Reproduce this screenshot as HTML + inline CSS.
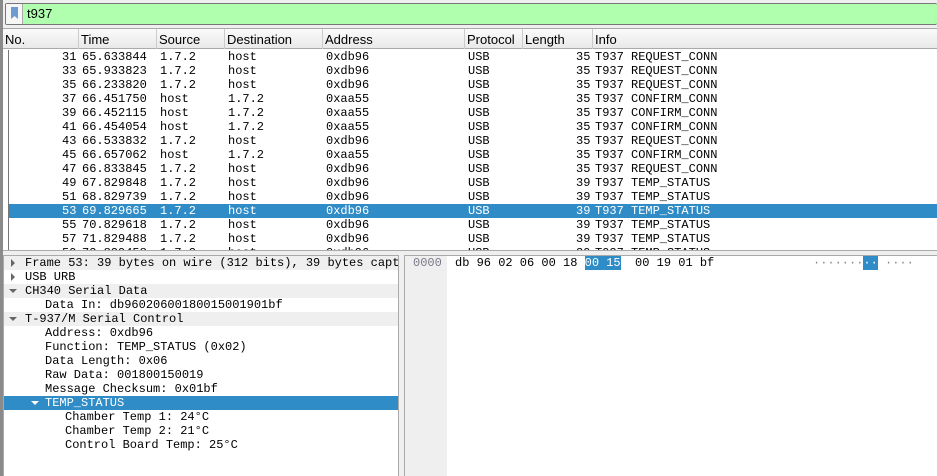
<!DOCTYPE html>
<html><head><meta charset="utf-8"><style>
*{margin:0;padding:0;box-sizing:border-box}
body{width:937px;height:476px;overflow:hidden;background:#efefef;position:relative;font-family:"Liberation Mono",monospace;font-size:12px;color:#000}
.a{position:absolute;white-space:pre}
.sans{font-family:"Liberation Sans",sans-serif;font-size:12px}
.row{position:absolute;left:0;width:937px;height:14px;line-height:14px}
.row span{position:absolute;top:0;white-space:pre}
.sel{background:#308cc6;color:#fff}
.d{position:absolute;left:0;width:398px;height:14px;line-height:14px;white-space:pre}
.g{background:#efefef}
.tri{position:absolute;left:7px;width:0;height:0}
.tr{border-top:4px solid transparent;border-bottom:4px solid transparent;border-left:4px solid #666;top:3px}
.td{border-left:4px solid transparent;border-right:4px solid transparent;border-top:4px solid #666;top:5px;left:5px}
</style></head><body>
<div class="a" style="left:0;top:0;width:3px;height:476px;background:#8a8a8a"></div>
<div class="a" style="left:5px;top:3px;width:932px;height:22px;border:1px solid #777;border-right:none;background:#afffaf;border-radius:2px"></div>
<div class="a" style="left:6px;top:4px;width:17px;height:20px;background:#f6f6f6;border-right:1px solid #aaa"></div>
<div class="a" style="left:11px;top:7px;width:7px;height:12px;background:#6b9bd1;clip-path:polygon(0 0,100% 0,100% 100%,50% 75%,0 100%)"></div>
<div class="a sans" style="left:27px;top:6px;font-size:13px">t937</div>
<div class="a" style="left:3px;top:28px;width:934px;height:223px;background:#fff;border-top:1px solid #aaa;border-bottom:1px solid #aaa"></div>
<div class="a" style="left:3px;top:29px;width:934px;height:20px;background:linear-gradient(#fafafa,#e9e9e9);border-bottom:1px solid #aaa"></div>
<div class="a sans" style="left:5px;top:32px;font-size:13px">No.</div>
<div class="a sans" style="left:81px;top:32px;font-size:13px">Time</div>
<div class="a sans" style="left:159px;top:32px;font-size:13px">Source</div>
<div class="a sans" style="left:227px;top:32px;font-size:13px">Destination</div>
<div class="a sans" style="left:325px;top:32px;font-size:13px">Address</div>
<div class="a sans" style="left:467px;top:32px;font-size:13px">Protocol</div>
<div class="a sans" style="left:525px;top:32px;font-size:13px">Length</div>
<div class="a sans" style="left:595px;top:32px;font-size:13px">Info</div>
<div class="a" style="left:78px;top:29px;width:1px;height:20px;background:#ccc"></div>
<div class="a" style="left:156px;top:29px;width:1px;height:20px;background:#ccc"></div>
<div class="a" style="left:224px;top:29px;width:1px;height:20px;background:#ccc"></div>
<div class="a" style="left:322px;top:29px;width:1px;height:20px;background:#ccc"></div>
<div class="a" style="left:464px;top:29px;width:1px;height:20px;background:#ccc"></div>
<div class="a" style="left:522px;top:29px;width:1px;height:20px;background:#ccc"></div>
<div class="a" style="left:592px;top:29px;width:1px;height:20px;background:#ccc"></div>
<div class="a" style="left:3px;top:50px;width:934px;height:200px;overflow:hidden">
<div class="a" style="left:5px;top:0;width:1px;height:200px;background:#777"></div>
<div class="row" style="top:0px"><span style="left:59px">31</span><span style="left:79px">65.633844</span><span style="left:157px">1.7.2</span><span style="left:225px">host</span><span style="left:323px">0xdb96</span><span style="left:465px">USB</span><span style="left:573px">35</span><span style="left:592px">T937 REQUEST_CONN</span></div>
<div class="row" style="top:14px"><span style="left:59px">33</span><span style="left:79px">65.933823</span><span style="left:157px">1.7.2</span><span style="left:225px">host</span><span style="left:323px">0xdb96</span><span style="left:465px">USB</span><span style="left:573px">35</span><span style="left:592px">T937 REQUEST_CONN</span></div>
<div class="row" style="top:28px"><span style="left:59px">35</span><span style="left:79px">66.233820</span><span style="left:157px">1.7.2</span><span style="left:225px">host</span><span style="left:323px">0xdb96</span><span style="left:465px">USB</span><span style="left:573px">35</span><span style="left:592px">T937 REQUEST_CONN</span></div>
<div class="row" style="top:42px"><span style="left:59px">37</span><span style="left:79px">66.451750</span><span style="left:157px">host</span><span style="left:225px">1.7.2</span><span style="left:323px">0xaa55</span><span style="left:465px">USB</span><span style="left:573px">35</span><span style="left:592px">T937 CONFIRM_CONN</span></div>
<div class="row" style="top:56px"><span style="left:59px">39</span><span style="left:79px">66.452115</span><span style="left:157px">host</span><span style="left:225px">1.7.2</span><span style="left:323px">0xaa55</span><span style="left:465px">USB</span><span style="left:573px">35</span><span style="left:592px">T937 CONFIRM_CONN</span></div>
<div class="row" style="top:70px"><span style="left:59px">41</span><span style="left:79px">66.454054</span><span style="left:157px">host</span><span style="left:225px">1.7.2</span><span style="left:323px">0xaa55</span><span style="left:465px">USB</span><span style="left:573px">35</span><span style="left:592px">T937 CONFIRM_CONN</span></div>
<div class="row" style="top:84px"><span style="left:59px">43</span><span style="left:79px">66.533832</span><span style="left:157px">1.7.2</span><span style="left:225px">host</span><span style="left:323px">0xdb96</span><span style="left:465px">USB</span><span style="left:573px">35</span><span style="left:592px">T937 REQUEST_CONN</span></div>
<div class="row" style="top:98px"><span style="left:59px">45</span><span style="left:79px">66.657062</span><span style="left:157px">host</span><span style="left:225px">1.7.2</span><span style="left:323px">0xaa55</span><span style="left:465px">USB</span><span style="left:573px">35</span><span style="left:592px">T937 CONFIRM_CONN</span></div>
<div class="row" style="top:112px"><span style="left:59px">47</span><span style="left:79px">66.833845</span><span style="left:157px">1.7.2</span><span style="left:225px">host</span><span style="left:323px">0xdb96</span><span style="left:465px">USB</span><span style="left:573px">35</span><span style="left:592px">T937 REQUEST_CONN</span></div>
<div class="row" style="top:126px"><span style="left:59px">49</span><span style="left:79px">67.829848</span><span style="left:157px">1.7.2</span><span style="left:225px">host</span><span style="left:323px">0xdb96</span><span style="left:465px">USB</span><span style="left:573px">39</span><span style="left:592px">T937 TEMP_STATUS</span></div>
<div class="row" style="top:140px"><span style="left:59px">51</span><span style="left:79px">68.829739</span><span style="left:157px">1.7.2</span><span style="left:225px">host</span><span style="left:323px">0xdb96</span><span style="left:465px">USB</span><span style="left:573px">39</span><span style="left:592px">T937 TEMP_STATUS</span></div>
<div class="row sel" style="top:154px;left:6px"><span style="left:53px">53</span><span style="left:73px">69.829665</span><span style="left:151px">1.7.2</span><span style="left:219px">host</span><span style="left:317px">0xdb96</span><span style="left:459px">USB</span><span style="left:567px">39</span><span style="left:586px">T937 TEMP_STATUS</span></div>
<div class="row" style="top:168px"><span style="left:59px">55</span><span style="left:79px">70.829618</span><span style="left:157px">1.7.2</span><span style="left:225px">host</span><span style="left:323px">0xdb96</span><span style="left:465px">USB</span><span style="left:573px">39</span><span style="left:592px">T937 TEMP_STATUS</span></div>
<div class="row" style="top:182px"><span style="left:59px">57</span><span style="left:79px">71.829488</span><span style="left:157px">1.7.2</span><span style="left:225px">host</span><span style="left:323px">0xdb96</span><span style="left:465px">USB</span><span style="left:573px">39</span><span style="left:592px">T937 TEMP_STATUS</span></div>
<div class="row" style="top:196px"><span style="left:59px">59</span><span style="left:79px">72.829458</span><span style="left:157px">1.7.2</span><span style="left:225px">host</span><span style="left:323px">0xdb96</span><span style="left:465px">USB</span><span style="left:573px">39</span><span style="left:592px">T937 TEMP_STATUS</span></div>
</div>
<div class="a" style="left:3px;top:255px;width:396px;height:221px;background:#fff;border:1px solid #aaa;border-bottom:none;overflow:hidden">
<div class="d g" style="top:0"><span class="tri tr"></span><span style="position:absolute;left:21px">Frame 53: 39 bytes on wire (312 bits), 39 bytes capt</span></div>
<div class="d" style="top:14px"><span class="tri tr"></span><span style="position:absolute;left:21px">USB URB</span></div>
<div class="d g" style="top:28px"><span class="tri td"></span><span style="position:absolute;left:21px">CH340 Serial Data</span></div>
<div class="d" style="top:42px"><span style="position:absolute;left:41px">Data In: db96020600180015001901bf</span></div>
<div class="d g" style="top:56px"><span class="tri td"></span><span style="position:absolute;left:21px">T-937/M Serial Control</span></div>
<div class="d" style="top:70px"><span style="position:absolute;left:41px">Address: 0xdb96</span></div>
<div class="d" style="top:84px"><span style="position:absolute;left:41px">Function: TEMP_STATUS (0x02)</span></div>
<div class="d" style="top:98px"><span style="position:absolute;left:41px">Data Length: 0x06</span></div>
<div class="d" style="top:112px"><span style="position:absolute;left:41px">Raw Data: 001800150019</span></div>
<div class="d" style="top:126px"><span style="position:absolute;left:41px">Message Checksum: 0x01bf</span></div>
<div class="d sel" style="top:140px"><span class="tri td" style="left:27px;border-top-color:#fff"></span><span style="position:absolute;left:41px">TEMP_STATUS</span></div>
<div class="d" style="top:154px"><span style="position:absolute;left:61px">Chamber Temp 1: 24°C</span></div>
<div class="d" style="top:168px"><span style="position:absolute;left:61px">Chamber Temp 2: 21°C</span></div>
<div class="d" style="top:182px"><span style="position:absolute;left:61px">Control Board Temp: 25°C</span></div>
</div>
<div class="a" style="left:404px;top:255px;width:533px;height:221px;background:#fff;border:1px solid #aaa;border-right:none;border-bottom:none"></div>
<div class="a" style="left:405px;top:256px;width:42px;height:220px;background:#efefef"></div>
<div class="a" style="left:413px;top:256px;line-height:14px;color:#7a7a8a">0000</div>
<div class="a" style="left:455px;top:256px;line-height:14px">db 96 02 06 00 18 <span style="background:#308cc6;color:#fff">00 15</span>  00 19 01 bf</div>
<div class="a" style="left:813px;top:256px;line-height:14px;color:#888">·······<span style="background:#308cc6;color:#fff">··</span> ····</div>
</body></html>
